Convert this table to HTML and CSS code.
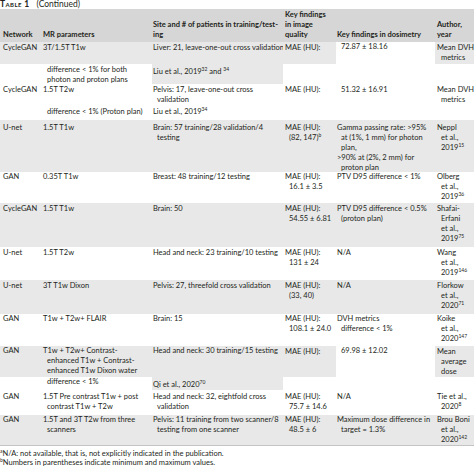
FILE: index.html
```html
<!DOCTYPE html>
<html lang="en">
<head>
<meta charset="utf-8">
<title>Table 1 (Continued)</title>
<link rel="stylesheet" href="styles.css">
</head>
<body>
<div class="title"><span class="tlabel">Table 1</span><span class="cont">(Continued)</span></div>
<div class="grid">
  <!-- header -->
  <div class="hd k1 y1"><p>Network</p></div>
  <div class="hd k2 y1"><p>MR parameters</p></div>
  <div class="hd k3 y1"><p>Site and # of patients in training/test-<br>ing</p></div>
  <div class="hd k4 y1"><p>Key findings<br>in image<br>quality</p></div>
  <div class="hd k5 y1"><p>Key findings in dosimetry</p></div>
  <div class="hd k6 y1"><p>Author,<br>year</p></div>

  <!-- row A -->
  <div class="c s k1 y2"><p class="t">CycleGAN</p></div>
  <div class="c s k2 y2"><p class="t">3T/1.5T T1w</p></div>
  <div class="c s k3 y2"><p class="t">Liver: 21, leave-one-out cross validation</p></div>
  <div class="c s k4 y2"><p class="t">MAE (HU):</p></div>
  <div class="c k5 y2s p0"><p class="in">72.87 ± 18.16</p></div>
  <div class="c s k6 y2"><p class="t">Mean DVH<br>metrics</p></div>
  <div class="c k2 y3"><p class="in">difference &lt; 1% for both<br>photon and proton plans</p></div>
  <div class="c s k3 y3 p3"><p class="t">Liu et al., 2019<sup>32</sup> and <sup>34</sup></p></div>

  <!-- row B -->
  <div class="c k1 y4s"><p class="t">CycleGAN</p></div>
  <div class="c k2 y4"><p class="t">1.5T T2w</p></div>
  <div class="c k3 y4"><p class="t">Pelvis: 17, leave-one-out cross<br>validation</p></div>
  <div class="c k4 y4s"><p class="t">MAE (HU):</p></div>
  <div class="c k5 y4s"><p class="in">51.32 ± 16.91</p></div>
  <div class="c k6 y4s"><p class="t">Mean DVH<br>metrics</p></div>
  <div class="c k2 y5"><p class="in">difference &lt; 1% (Proton plan)</p></div>
  <div class="c k3 y5"><p class="t">Liu et al., 2019<sup>34</sup></p></div>

  <!-- row C -->
  <div class="c s k1 y6 p3"><p class="t">U-net</p></div>
  <div class="c s k2 y6 p3"><p class="t">1.5T T1w</p></div>
  <div class="c s k3 y6 p3"><p class="t">Brain: 57 training/28 validation/4<br>testing</p></div>
  <div class="c s k4 y6 p3"><p class="t">MAE (HU):<br>(82, 147)<sup>b</sup></p></div>
  <div class="c s k5 y6 p3"><p class="t">Gamma passing rate: &gt;95%<br>at (1%, 1 mm) for photon<br>plan,</p><p class="t">&gt;90% at (2%, 2 mm) for<br>proton plan</p></div>
  <div class="c s k6 y6 p3"><p class="t">Neppl<br>et al.,<br>2019<sup>15</sup></p></div>

  <!-- row D -->
  <div class="c k1 y7 p0"><p class="t">GAN</p></div>
  <div class="c k2 y7 p0"><p class="t">0.35T T1w</p></div>
  <div class="c k3 y7 p0"><p class="t">Breast: 48 training/12 testing</p></div>
  <div class="c k4 y7 p0"><p class="t">MAE (HU):<br>16.1 ± 3.5</p></div>
  <div class="c k5 y7 p0"><p class="t">PTV D95 difference &lt; 1%</p></div>
  <div class="c k6 y7 p0"><p class="t">Olberg<br>et al.,<br>2019<sup>36</sup></p></div>

  <!-- row E -->
  <div class="c s k1 y8"><p class="t">CycleGAN</p></div>
  <div class="c s k2 y8"><p class="t">1.5T T1w</p></div>
  <div class="c s k3 y8"><p class="t">Brain: 50</p></div>
  <div class="c s k4 y8"><p class="t">MAE (HU):<br>54.55 ± 6.81</p></div>
  <div class="c s k5 y8"><p class="t">PTV D95 difference &lt; 0.5%<br>(proton plan)</p></div>
  <div class="c s k6 y8"><p class="t">Shafai-<br>Erfani<br>et al.,<br>2019<sup>75</sup></p></div>

  <!-- row F -->
  <div class="c k1 y9"><p class="t">U-net</p></div>
  <div class="c k2 y9"><p class="t">1.5T T2w</p></div>
  <div class="c k3 y9"><p class="t">Head and neck: 23 training/10 testing</p></div>
  <div class="c k4 y9"><p class="t">MAE (HU):<br>131 ± 24</p></div>
  <div class="c k5 y9"><p class="t">N/A</p></div>
  <div class="c k6 y9"><p class="t">Wang<br>et al.,<br>2019<sup>146</sup></p></div>

  <!-- row G -->
  <div class="c s k1 y10"><p class="t">U-net</p></div>
  <div class="c s k2 y10"><p class="t">3T T1w Dixon</p></div>
  <div class="c s k3 y10"><p class="t">Pelvis: 27, threefold cross validation</p></div>
  <div class="c s k4 y10"><p class="t">MAE (HU):<br>(33, 40)</p></div>
  <div class="c s k5 y10"><p class="t">N/A</p></div>
  <div class="c s k6 y10"><p class="t">Florkow<br>et al.,<br>2020<sup>71</sup></p></div>

  <!-- row H -->
  <div class="c k1 y11 p0"><p class="t">GAN</p></div>
  <div class="c k2 y11 p0"><p class="t">T1w + T2w+ FLAIR</p></div>
  <div class="c k3 y11 p0"><p class="t">Brain: 15</p></div>
  <div class="c k4 y11 p0"><p class="t">MAE (HU):<br>108.1 ± 24.0</p></div>
  <div class="c k5 y11 p0"><p class="t">DVH metrics<br>difference &lt; 1%</p></div>
  <div class="c k6 y11 p0"><p class="t">Koike<br>et al.,<br>2020<sup>147</sup></p></div>

  <!-- row I -->
  <div class="c s k1 y12 p0"><p class="t">GAN</p></div>
  <div class="c s k2 y12 p0"><p class="t">T1w + T2w+ Contrast-<br>enhanced T1w + Contrast-<br>enhanced T1w Dixon water</p></div>
  <div class="c s k3 y12 p0"><p class="t">Head and neck: 30 training/15 testing</p></div>
  <div class="c s k4 y12 p1"><p class="t">MAE (HU):</p></div>
  <div class="c k5 y12s p0"><p class="in">69.98 ± 12.02</p></div>
  <div class="c s k6 y12 p1"><p class="t">Mean<br>average<br>dose</p></div>
  <div class="c k2 y13 p0"><p class="in">difference &lt; 1%</p></div>
  <div class="c s k3 y13 p3"><p class="t">Qi et al., 2020<sup>70</sup></p></div>

  <!-- row J -->
  <div class="c k1 y14 p2"><p class="t">GAN</p></div>
  <div class="c k2 y14 p2"><p class="t">1.5T Pre contrast T1w + post<br>contrast T1w + T2w</p></div>
  <div class="c k3 y14 p2"><p class="t">Head and neck: 32, eightfold cross<br>validation</p></div>
  <div class="c k4 y14 p2"><p class="t">MAE (HU):<br>75.7 ± 14.6</p></div>
  <div class="c k5 y14 p2"><p class="t">N/A</p></div>
  <div class="c k6 y14 p2"><p class="t">Tie et al.,<br>2020<sup>8</sup></p></div>

  <!-- row K -->
  <div class="c s k1 y15 p0"><p class="t">GAN</p></div>
  <div class="c s k2 y15 p0"><p class="t">1.5T and 3T T2w from three<br>scanners</p></div>
  <div class="c s k3 y15 p0"><p class="t">Pelvis: 11 training from two scanner/8<br>testing from one scanner</p></div>
  <div class="c s k4 y15 p0"><p class="t">MAE (HU):<br>48.5 ± 6</p></div>
  <div class="c s k5 y15 p0"><p class="t">Maximum dose difference in<br>target = 1.3%</p></div>
  <div class="c s k6 y15 p0"><p class="t">Brou Boni<br>et al.,<br>2020<sup>142</sup></p></div>
</div>
<div class="notes">
  <p><sup>a</sup>N/A: not available, that is, not explicitly indicated in the publication.</p>
  <p><sup>b</sup>Numbers in parentheses indicate minimum and maximum values.</p>
</div>
</body>
</html>
```

FILE: styles.css
```css
html, body {
  margin: 0;
  padding: 0;
  background: #ffffff;
}

body {
  width: 474px;
  font-family: Lato, "Open Sans", "Liberation Sans", sans-serif;
  font-size: 7.5px;
  line-height: 10px;
  color: #231f20;
}

p {
  margin: 0;
}

.title {
  height: 9px;
  line-height: 8px;
  font-size: 8.5px;
  white-space: nowrap;
}

.tlabel {
  font-weight: 700;
  font-variant: small-caps;
  letter-spacing: 0.4px;
}

.cont {
  margin-left: 7px;
}

.grid {
  display: grid;
  grid-template-columns: 40px 112px 131px 53px 99px 39px;
  grid-template-rows: 33px 22px 20px 22px 14px 52px 31px 44px 33px 34px 32px 31px 13px 25px 30px;
  border-bottom: 1px solid #c4c4c4;
}

.grid > div {
  white-space: nowrap;
  min-width: 0;
}

.hd {
  background: #d6d6d6;
  font-weight: 700;
  display: flex;
  flex-direction: column;
  justify-content: flex-end;
  padding-bottom: 2px;
}

.c {
  padding-top: 1px;
}

.s {
  background: #e8e8e8;
}

.p0 { padding-top: 0; }
.p1 { padding-top: 1px; }
.p2 { padding-top: 2px; }
.p3 { padding-top: 3px; }

.t {
  padding-left: 4px;
  text-indent: -4px;
}

.in {
  padding-left: 4px;
}

sup {
  font-size: 5px;
  line-height: 0;
  vertical-align: 3px;
}

/* columns */
.k1 { grid-column: 1; padding-left: 3px; }
.k2 { grid-column: 2; padding-left: 3px; }
.k3 { grid-column: 3; padding-left: 1px; }
.k4 { grid-column: 4; padding-left: 2px; }
.k5 { grid-column: 5; padding-left: 1px; }
.k6 { grid-column: 6; padding-left: 2px; }

/* rows */
.y1 { grid-row: 1; }
.y2 { grid-row: 2; }
.y3 { grid-row: 3; }
.y2s { grid-row: 2 / 4; }
.y4 { grid-row: 4; }
.y5 { grid-row: 5; }
.y4s { grid-row: 4 / 6; }
.y6 { grid-row: 6; }
.y7 { grid-row: 7; }
.y8 { grid-row: 8; }
.y9 { grid-row: 9; }
.y10 { grid-row: 10; }
.y11 { grid-row: 11; }
.y12 { grid-row: 12; }
.y13 { grid-row: 13; }
.y12s { grid-row: 12 / 14; }
.y14 { grid-row: 14; }
.y15 { grid-row: 15; }

.notes {
  margin-top: 3px;
  line-height: 9px;
  font-size: 7.5px;
  white-space: nowrap;
}
```
